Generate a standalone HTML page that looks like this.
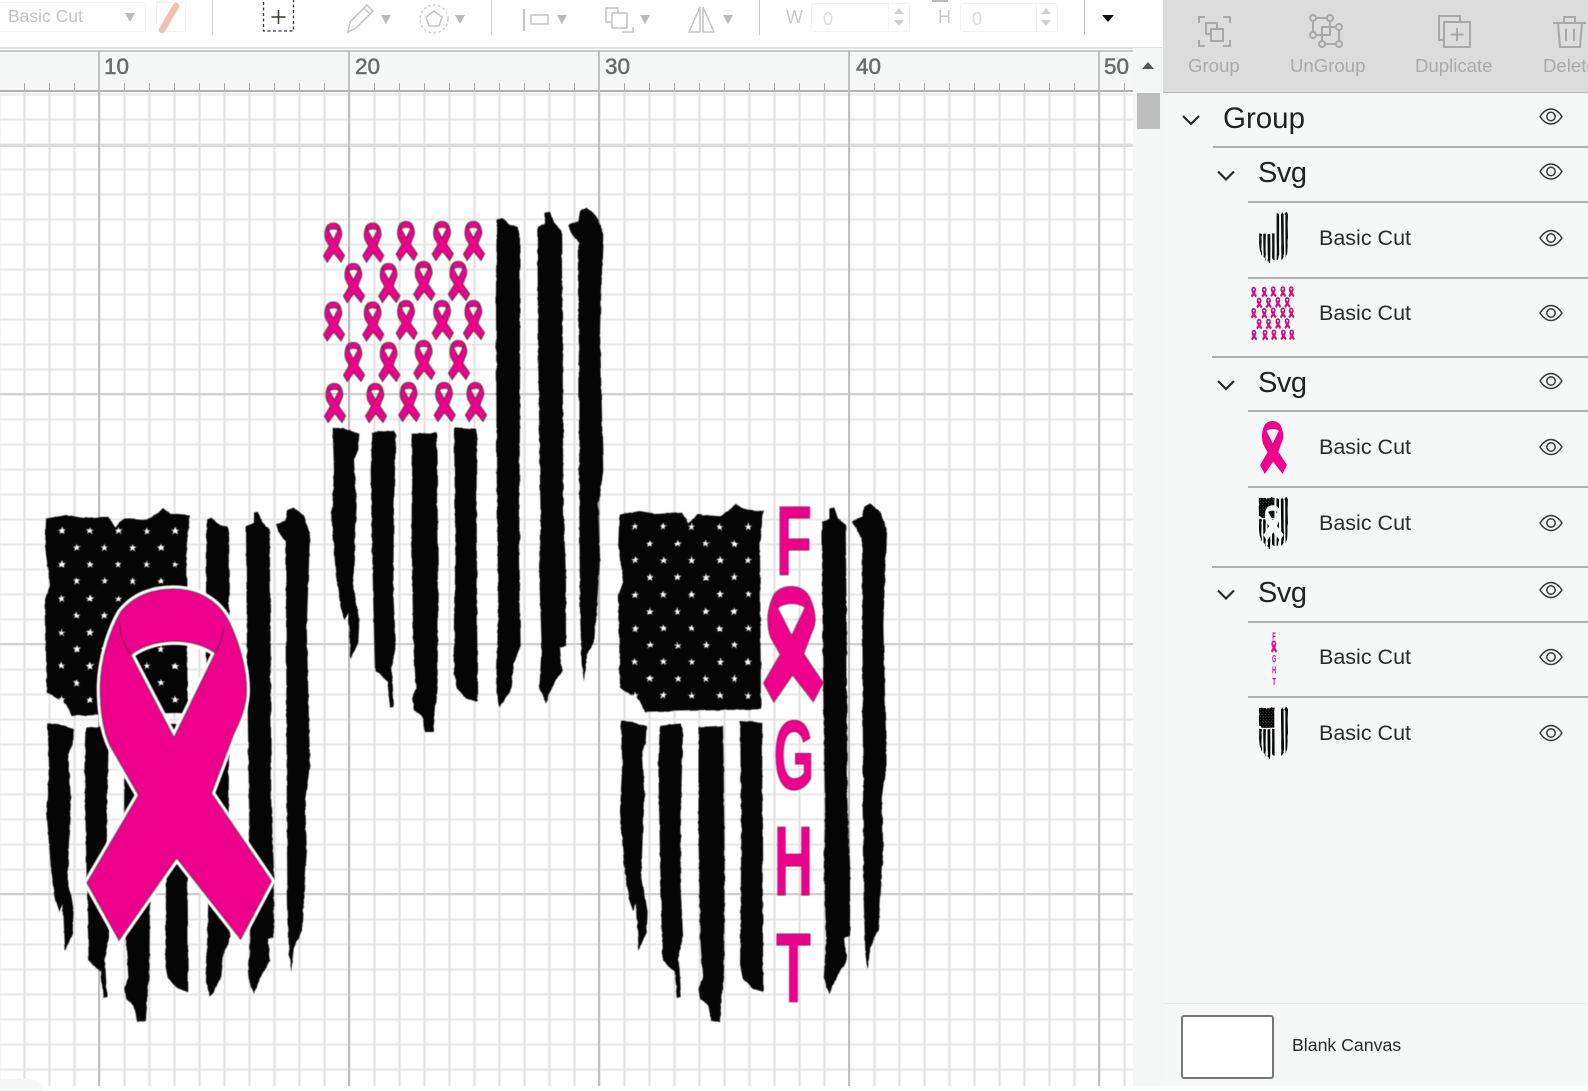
<!DOCTYPE html>
<html><head><meta charset="utf-8"><title>Canvas</title>
<style>
html,body{margin:0;padding:0;background:#fff}
body{width:1588px;height:1086px;position:relative;overflow:hidden;font-family:"Liberation Sans",sans-serif}
.a{position:absolute}
.t{position:absolute;white-space:nowrap;line-height:1}
#grid{left:0;top:92px;width:1133px;height:994px;background-color:#fff;
background-image:linear-gradient(to right,#dfdfdf 2px,transparent 2px),linear-gradient(to bottom,#e6e6e6 2px,transparent 2px);
background-size:25px 100%,100% 25px;background-position:23.5px 0,0 1.5px;filter:blur(.4px)}
#ruler{left:0;top:50px;width:1133px;height:42px;background:#f6f7f7;border-top:2px solid #c9c9c9;border-bottom:2px solid #b2b2b2;box-sizing:border-box}
#ticks{left:0;top:83px;width:1133px;height:7px;background-image:linear-gradient(to right,#aaa 1px,transparent 1px);background-size:25px 100%;background-position:24px 0}
.mv{position:absolute;top:50px;bottom:0;width:2px;background:#c0c0c0}
.mh{position:absolute;left:0;width:1133px;height:2px;background:#cfcfcf}
.rl{font-size:22.5px;color:#6a6a6a;-webkit-text-stroke:.5px #6a6a6a;top:56px}
.sep{position:absolute;top:0;width:1px;height:35px;background:#ccc}
.car{position:absolute;width:0;height:0;border-left:5px solid transparent;border-right:5px solid transparent;border-top:9px solid #bbb;top:15px}
.inp{position:absolute;top:3px;height:29px;border:1px solid #f3f3f3;border-radius:3px;box-sizing:border-box;color:#dcdcdc;font-size:18px;padding:5px 0 0 11px}
.hl{font-size:18.6px;color:#aaa;top:57px}
.l{position:absolute;height:2px;right:0;background:#b0b0b0}
.bc{font-size:21.5px;color:#2a2a2a;left:1319px}
.sv{font-size:29px;color:#222;left:1258px;letter-spacing:-.5px}
</style></head><body>

<div class="a" style="left:0;top:0;width:1133px;height:48px;background:#fff"></div>
<div class="a" id="grid"></div>
<div class="a" style="left:0;top:144px;width:1133px;height:3px;background:#dcdcdc"></div>
<div class="mh" style="top:393px"></div><div class="mh" style="top:643px"></div><div class="mh" style="top:893px"></div>
<div class="a" id="ruler"></div><div class="a" id="ticks"></div>
<div class="mv" style="left:98px"></div><div class="mv" style="left:348px"></div><div class="mv" style="left:598px"></div><div class="mv" style="left:848px"></div><div class="mv" style="left:1098px"></div>
<div class="t rl" style="left:104px">10</div><div class="t rl" style="left:355px">20</div><div class="t rl" style="left:605px">30</div><div class="t rl" style="left:856px">40</div><div class="t rl" style="left:1104px">50</div>
<div class="a" style="left:-10px;top:1079px;width:52px;height:12px;background:#f7f7f7;border-radius:0 12px 0 0"></div>

<!-- toolbar -->
<div class="a" style="left:-4px;top:2px;width:150px;height:30px;border:1px solid #f3f3f3;border-radius:3px;box-sizing:border-box"></div>
<div class="t" style="left:8px;top:8px;font-size:17.5px;color:#c4c4c4">Basic Cut</div>
<div class="car" style="left:125px;top:13px"></div>
<div class="a" style="left:156px;top:2px;width:30px;height:30px;border:1px solid #f3f3f3;box-sizing:border-box"></div>
<div class="sep" style="left:212px"></div><div class="sep" style="left:491px"></div><div class="sep" style="left:759px"></div><div class="sep" style="left:1084px;background:#bbb"></div>
<div class="car" style="left:381px"></div><div class="car" style="left:455px"></div><div class="car" style="left:557px"></div><div class="car" style="left:640px"></div><div class="car" style="left:723px"></div>
<div class="t" style="left:786px;top:8px;font-size:18px;color:#c8c8c8">W</div>
<div class="inp" style="left:811px;width:99px">0</div>
<div class="a" style="left:888px;top:3px;width:1px;height:29px;background:#f3f3f3"></div>
<div class="t" style="left:938px;top:8px;font-size:18px;color:#c8c8c8">H</div>
<div class="inp" style="left:960px;width:98px">0</div>
<div class="a" style="left:1036px;top:3px;width:1px;height:29px;background:#f3f3f3"></div>
<div class="a" style="left:932px;top:0;width:16px;height:2px;background:#bbb"></div>
<div class="a" style="left:0;top:47px;width:1163px;height:2px;background:#e2e2e2"></div>

<!-- scrollbar track -->
<div class="a" style="left:1133px;top:48px;width:30px;height:1038px;background:#f5f6f6"></div>
<div class="a" style="left:1137px;top:93px;width:23px;height:36px;background:#bdbdbd"></div>

<!-- side panel -->
<div class="a" style="left:1163px;top:0;width:425px;height:1086px;background:#f6f8f8"></div>
<div class="a" style="left:1163px;top:0;width:425px;height:92px;background:#dcdcdc;border-bottom:1px solid #b8b8b8;box-sizing:content-box"></div>
<div class="t hl" style="left:1188px">Group</div>
<div class="t hl" style="left:1290px">UnGroup</div>
<div class="t hl" style="left:1415px">Duplicate</div>
<div class="t hl" style="left:1543px">Delete</div>

<div class="l" style="left:1213px;top:146px"></div>
<div class="l" style="left:1248px;top:201px"></div>
<div class="l" style="left:1248px;top:277px"></div>
<div class="l" style="left:1212px;top:356px"></div>
<div class="l" style="left:1248px;top:410px"></div>
<div class="l" style="left:1248px;top:486px"></div>
<div class="l" style="left:1212px;top:566px"></div>
<div class="l" style="left:1248px;top:621px"></div>
<div class="l" style="left:1248px;top:696px"></div>

<div class="t" style="left:1223px;top:104px;font-size:29.5px;color:#222">Group</div>
<div class="t sv" style="top:159px">Svg</div>
<div class="t sv" style="top:369px">Svg</div>
<div class="t sv" style="top:579px">Svg</div>
<div class="t bc" style="top:228px">Basic Cut</div>
<div class="t bc" style="top:303px">Basic Cut</div>
<div class="t bc" style="top:437px">Basic Cut</div>
<div class="t bc" style="top:513px">Basic Cut</div>
<div class="t bc" style="top:647px">Basic Cut</div>
<div class="t bc" style="top:723px">Basic Cut</div>

<div class="a" style="left:1163px;top:1003px;width:425px;height:1px;background:#eaeaea"></div>
<div class="a" style="left:1181px;top:1015px;width:93px;height:64px;background:#fff;border:2px solid #777;border-radius:3px;box-sizing:border-box"></div>
<div class="t" style="left:1292px;top:1037px;font-size:17.7px;color:#2a2a2a">Blank Canvas</div>

<svg class="a" style="left:0;top:0" width="1588" height="1086" viewBox="0 0 1588 1086">
<defs>
<filter id="r" x="-5%" y="-5%" width="110%" height="110%" color-interpolation-filters="sRGB"><feTurbulence type="fractalNoise" baseFrequency=".12" numOctaves="2" seed="3"/><feDisplacementMap in="SourceGraphic" scale="2.5" xChannelSelector="R" yChannelSelector="G"/><feGaussianBlur stdDeviation=".6"/></filter>
<filter id="b" x="-5%" y="-5%" width="110%" height="110%"><feGaussianBlur stdDeviation=".4"/></filter>
<polygon id="st1" points="560,85 575,80 600,100 625,105 630,140 630,600 628,1000 632,1300 612,1350 605,1420 570,1475 558,1430 565,1200 560,800 558,300"/>
<g id="st">
<polygon points="682,105 705,95 705,65 720,62 730,90 755,115 758,400 760,900 768,1100 768,1300 750,1305 757,1370 725,1420 707,1465 688,1420 695,1300 688,1100 692,950 685,500"/>
<polygon points="775,100 805,88 810,60 830,50 860,75 880,125 870,400 880,800 865,900 870,1050 855,1280 830,1330 822,1400 815,1350 810,1200 808,900 805,150 780,115"/>
<polygon points="68,678 100,680 148,695 145,740 132,770 140,900 135,1000 130,1130 140,1180 148,1230 145,1290 122,1340 115,1205 105,1228 92,1190 78,1100 70,1000 65,940 72,800"/>
<polygon points="187,692 250,685 258,700 252,900 250,1150 258,1300 245,1360 252,1475 240,1475 232,1400 195,1370 188,1100 182,800"/>
<polygon points="305,695 380,692 382,800 385,1100 383,1400 370,1545 345,1545 335,1500 310,1480 305,1450 318,1420 310,1300 305,1000"/>
<polygon points="432,678 500,682 500,900 503,1460 470,1450 440,1420 432,1380 436,1000"/>
</g>
<path id="s" fill="#fff" d="M0-4L1-1.1 3.8-1.1 1.6.5 2.4 3.4 0 1.7-2.4 3.4-1.6.5-3.8-1.1-1-1.1Z"/>
<g id="r5"><use href="#s" x="635"/><use href="#s" x="663.3"/><use href="#s" x="691.7"/><use href="#s" x="720"/><use href="#s" x="748.3"/></g>
<g id="r4"><use href="#s" x="650"/><use href="#s" x="677.7"/><use href="#s" x="706"/><use href="#s" x="734.3"/></g>
<g id="can">
<polygon transform="translate(600 490) scale(.3333 .3508)" fill="#050505" points="58,70 120,60 170,68 245,65 265,95 295,70 360,75 410,40 430,55 490,60 480,150 483,625 135,632 120,600 60,565 55,300 70,260 55,150"/>
<use href="#r5" y="526.8"/><use href="#r4" y="543.7"/><use href="#r5" y="560.2"/><use href="#r4" y="577"/><use href="#r5" y="594.5"/><use href="#r4" y="611.4"/><use href="#r5" y="628.5"/><use href="#r4" y="645"/><use href="#r5" y="661.9"/><use href="#r4" y="678.7"/><use href="#r5" y="695.5"/>
</g>
<path id="rbp" transform="translate(-477 -783)" fill-rule="evenodd" d="M460 282C540 282 600 320 630 380C665 450 680 520 680 570C680 620 660 660 640 700L575 865L755 1115L662 1282L470 1050L297 1285L200 1120L355 870L270 730C245 680 240 610 240 560C242 480 270 400 300 350C340 300 400 282 460 282ZM333 470C400 420 520 420 585 465L462 705Z"/>
<g id="rb"><use href="#rbp"/><path transform="translate(-477 -783)" fill="none" d="M298 375C300 420 315 450 335 472M612 392C608 420 600 445 585 465"/></g>
<g id="fa"><use href="#can" transform="translate(-573.3 4)"/><g transform="translate(25.7 490.3) scale(.3231 .3437)" fill="#050505"><use href="#st1"/><use href="#st"/></g></g>
<g id="fc"><use href="#can"/><g transform="translate(598.7 486) scale(.3272 .3466)" fill="#050505"><use href="#st"/></g></g>
<g id="sr" fill="#ec008c" stroke="#2a2a2a" stroke-width="24">
<use href="#rb" transform="translate(334 242.6) scale(.038 .039)"/><use href="#rb" transform="translate(373.3 242.6) scale(.038 .039)"/><use href="#rb" transform="translate(406.7 241) scale(.038 .039)"/><use href="#rb" transform="translate(442.7 241) scale(.038 .039)"/><use href="#rb" transform="translate(474 241) scale(.038 .039)"/>
<use href="#rb" transform="translate(354 283) scale(.038 .039)"/><use href="#rb" transform="translate(389.3 283) scale(.038 .039)"/><use href="#rb" transform="translate(424.3 281) scale(.038 .039)"/><use href="#rb" transform="translate(459 281) scale(.038 .039)"/>
<use href="#rb" transform="translate(334 321.5) scale(.038 .039)"/><use href="#rb" transform="translate(373.3 321.5) scale(.038 .039)"/><use href="#rb" transform="translate(406.7 320) scale(.038 .039)"/><use href="#rb" transform="translate(442.7 320) scale(.038 .039)"/><use href="#rb" transform="translate(474 320) scale(.038 .039)"/>
<use href="#rb" transform="translate(354 362) scale(.038 .039)"/><use href="#rb" transform="translate(389.3 362) scale(.038 .039)"/><use href="#rb" transform="translate(424.3 360) scale(.038 .039)"/><use href="#rb" transform="translate(459 360) scale(.038 .039)"/>
<use href="#rb" transform="translate(335 403) scale(.038 .039)"/><use href="#rb" transform="translate(376 403) scale(.038 .039)"/><use href="#rb" transform="translate(409.3 402) scale(.038 .039)"/><use href="#rb" transform="translate(444.7 402) scale(.038 .039)"/><use href="#rb" transform="translate(476 402) scale(.038 .039)"/>
</g>
<g id="fight">
<g font-family="Liberation Sans,sans-serif" font-weight="700" font-size="98" text-anchor="middle" fill="#ec008c" stroke="#7a1458" stroke-width="1">
<text transform="translate(794 575) scale(.6 1)">F</text>
<text transform="translate(794 789) scale(.53 1)">G</text>
<text transform="translate(793.5 895) scale(.55 1)">H</text>
<text transform="translate(793.5 1002) scale(.58 1)">T</text>
</g>
<use href="#rb" transform="translate(793.3 644.3) scale(.108 .1157)" fill="#ec008c" stroke="#333" stroke-width="6"/>
</g>
<g id="eye" fill="none" stroke="#3a3a3a" stroke-width="1.5"><path d="M1 8.5C5 2.5 9 1 12 1C15 1 19 2.5 23 8.5C19 14.5 15 16 12 16C9 16 5 14.5 1 8.5Z"/><circle cx="12" cy="8.5" r="4.2"/></g>
<path id="chev" fill="none" stroke="#2a2a2a" stroke-width="2.2" d="M-8-4L0 4 8-4"/>
</defs>

<!-- toolbar icons -->
<line x1="176" y1="6" x2="162" y2="30" stroke="#f3bfae" stroke-width="6.5" stroke-linecap="round"/>
<rect x="263.5" y="-4" width="30" height="35" fill="none" stroke="#4a2a5a" stroke-width="1.3" stroke-dasharray="3 2.5"/>
<path d="M278.5 10V24M271.5 17H285.5" stroke="#333" stroke-width="1.5"/>
<path d="M348 32L350 22 367 5 373 11 356 28ZM364 8L370 14" fill="none" stroke="#c4c4c4" stroke-width="1.5"/>
<circle cx="434" cy="19" r="14" fill="none" stroke="#c8c8c8" stroke-width="1.3" stroke-dasharray="2.5 2.5"/>
<path d="M434 11L442 17 439 26H429L426 17Z" fill="none" stroke="#c4c4c4" stroke-width="1.5"/>
<path d="M524 9V31" stroke="#c4c4c4" stroke-width="2"/><rect x="531" y="15" width="17" height="9" fill="none" stroke="#c4c4c4" stroke-width="1.5"/>
<path d="M618 13V8H606V22H611M622 32H633V27" fill="none" stroke="#c4c4c4" stroke-width="1.5"/><rect x="612" y="13" width="15" height="15" fill="none" stroke="#c4c4c4" stroke-width="1.5"/>
<path d="M700 7L689 32H700ZM703 7L714 32H703Z" fill="none" stroke="#c4c4c4" stroke-width="1.5"/>
<path d="M899 8L904 14H894ZM899 26L904 20H894ZM1046 8L1051 14H1041ZM1046 26L1051 20H1041Z" fill="#cfcfcf"/>
<path d="M1102 15H1114L1108 22Z" fill="#111"/>
<path d="M1148 62L1154 69H1142Z" fill="#555"/>

<!-- header icons -->
<g fill="none" stroke="#a8a8a8" stroke-width="2">
<path d="M1199 23V17H1205M1223 17H1230V23M1230 40V46H1223M1205 46H1199V40"/><rect x="1206" y="23" width="11" height="11"/><rect x="1211" y="29" width="12" height="12" fill="#dcdcdc"/>
<rect x="1313" y="18" width="17" height="17"/><rect x="1322" y="27" width="17" height="17"/>
<g fill="#dcdcdc"><circle cx="1313" cy="18" r="3"/><circle cx="1330" cy="18" r="3"/><circle cx="1313" cy="35" r="3"/><circle cx="1322" cy="44" r="3"/><circle cx="1339" cy="44" r="3"/><circle cx="1339" cy="27" r="3"/></g>
<path d="M1444 40H1439V16H1460V22"/><rect x="1444" y="22" width="26" height="25"/><path d="M1457 28V41M1450.5 34.5H1463.5"/>
<path d="M1553 23H1586M1564 23V17H1575V23M1558 23L1560 47H1580L1582 23M1566 29V41M1574 29V41"/>
</g>

<!-- flags -->
<g filter="url(#r)"><use href="#fa"/></g>
<g filter="url(#r)"><g transform="translate(310 190) scale(.3333 .3508)" fill="#050505"><use href="#st1"/><use href="#st"/></g></g>
<g filter="url(#r)"><use href="#fc"/></g>
<g filter="url(#b)"><use href="#sr"/></g>
<g filter="url(#b)">
<use href="#rbp" transform="translate(179 764.6) scale(.3333 .3508)" fill="#ec008c" stroke="#fff" stroke-width="20"/>
<use href="#rb" transform="translate(179 764.6) scale(.3333 .3508)" fill="#ec008c" stroke="#222" stroke-width="2.5"/>
</g>
<g filter="url(#b)"><use href="#fight"/></g>

<!-- eyes -->
<use href="#eye" x="1539" y="108"/><use href="#eye" x="1539" y="163"/><use href="#eye" x="1539" y="229.5"/><use href="#eye" x="1539" y="304.5"/><use href="#eye" x="1539" y="372.5"/><use href="#eye" x="1539" y="438.5"/><use href="#eye" x="1539" y="514.5"/><use href="#eye" x="1539" y="581.5"/><use href="#eye" x="1539" y="648.5"/><use href="#eye" x="1539" y="724.5"/>
<!-- chevrons -->
<use href="#chev" x="1191" y="120"/><use href="#chev" x="1226" y="175.5"/><use href="#chev" x="1226" y="385"/><use href="#chev" x="1226" y="594.5"/>

<!-- thumbnails -->
<g transform="translate(1256.7 210.3) scale(.0356 .0341)" fill="#111"><use href="#st1"/><use href="#st"/></g>
<g transform="translate(1164.4 227.2) scale(.268)"><use href="#sr"/></g>
<use href="#rbp" transform="translate(1273.5 447.5) scale(.0486 .0528)" fill="#ec008c"/>
<g transform="translate(1253.8 445.8) scale(.11 .101)"><use href="#fa"/><use href="#rbp" transform="translate(179 764.6) scale(.3333 .3508)" fill="#f6f8f8"/></g>
<g transform="translate(1194.7 578) scale(.1 .1066)"><use href="#fight"/></g>
<g transform="translate(1191.7 656.7) scale(.1086 .1)"><use href="#fc"/></g>
</svg>
</body></html>
